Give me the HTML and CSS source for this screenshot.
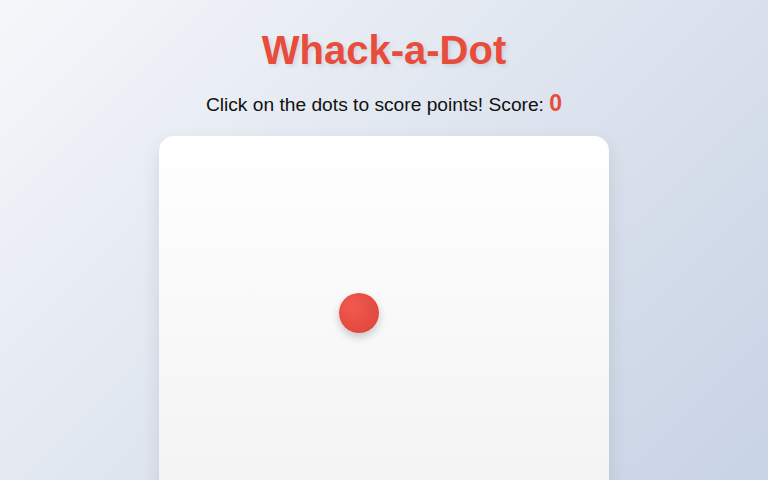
FILE: index.html
```html
<!DOCTYPE html>
<html lang="en">
<head>
  <meta charset="UTF-8">
  <meta name="viewport" content="width=device-width, initial-scale=1.0">
  <title>Whack-a-Dot</title>
  <link rel="stylesheet" href="styles.css">
</head>
<body>
  <h1>Whack-a-Dot</h1>
  <p class="instructions">Click on the dots to score points! Score: <span id="score">0</span></p>

  <div id="gameArea" class="game-area">
    <div class="dot" style="left: 180px; top: 157px;"></div>
  </div>
</body>
</html>
```

FILE: styles.css
```css
body {
  font-family: 'Liberation Sans', Arial, sans-serif;
  margin: 0;
  padding: 20px;
  min-height: 100vh;
  box-sizing: border-box;
  display: flex;
  flex-direction: column;
  align-items: center;
  background: linear-gradient(135deg, #f5f7fa 0%, #c3cfe2 100%);
  overflow: hidden;
}
h1 {
  color: #e74c3c;
  font-size: 2.5em;
  margin: 8px 0 17px;
  text-shadow: 2px 2px 4px rgba(0, 0, 0, 0.1);
}
.instructions {
  font-size: 1.2em;
  margin: 0 0 19px;
  color: #111;
}
#score {
  font-weight: bold;
  color: #e74c3c;
  font-size: 1.2em;
}
.game-area {
  position: relative;
  width: 450px;
  height: 450px;
  flex-shrink: 0;
  background: linear-gradient(to bottom, #ffffff, #f0f0f0);
  border-radius: 15px;
  box-shadow: 0 8px 20px rgba(0, 0, 0, 0.1);
}
.dot {
  position: absolute;
  width: 40px;
  height: 40px;
  border-radius: 50%;
  background: radial-gradient(circle at 35% 35%, #f05a4e, #de4238);
  box-shadow: 0 4px 8px rgba(0, 0, 0, 0.2);
  cursor: pointer;
}
```
